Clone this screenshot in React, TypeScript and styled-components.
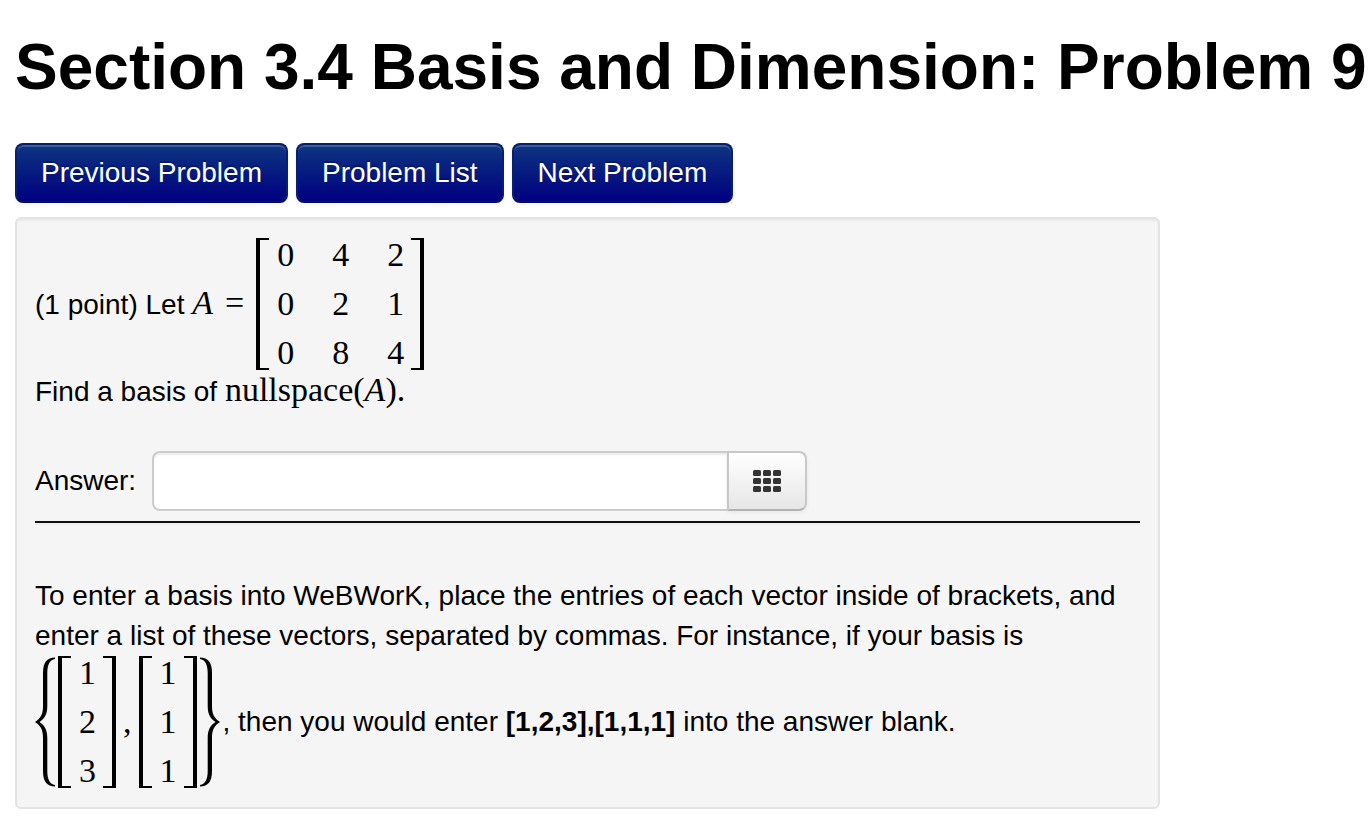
import React from "react";
import styled, { createGlobalStyle } from "styled-components";

const GlobalStyle = createGlobalStyle`
  *, *::before, *::after { box-sizing: border-box; }
  body {
    margin: 0;
    background: #fff;
    color: #000;
    font-family: "Liberation Sans", Arial, sans-serif;
    font-size: 28px;
    line-height: 40px;
  }
`;

const Page = styled.main`
  padding: 27px 0 11px 15px;
`;

const Title = styled.h1`
  margin: 0 0 36px;
  font-size: 64px;
  line-height: 80px;
  font-weight: 700;
`;

const ProblemNav = styled.nav`
  display: flex;
  flex-wrap: wrap;
  gap: 8px;
  margin-bottom: 14px;
`;

const NavButton = styled.a`
  padding: 8px 24px;
  border: 2px solid #04206f;
  border-bottom-color: #000f66;
  border-radius: 8px;
  background: linear-gradient(#0d3580, #000080) padding-box, #04206f;
  box-shadow: inset 0 2px 0 rgba(255, 255, 255, 0.2), 0 2px 4px rgba(0, 0, 0, 0.05);
  color: #fff;
  text-decoration: none;
  text-shadow: 0 -2px 0 rgba(0, 0, 0, 0.25);
`;

const ProblemPanel = styled.section`
  margin-right: 212px;
  padding: 19px 18px;
  border: 2px solid #e3e3e3;
  border-radius: 6px;
  background: #f5f5f5;
  box-shadow: inset 0 2px 2px rgba(0, 0, 0, 0.05);
`;

const Line = styled.div`
  display: flex;
  align-items: center;
  white-space: pre;
`;

const MathText = styled.span`
  font-family: "Liberation Serif", "Times New Roman", serif;
  font-size: 34px;
`;

const Equals = styled.span`
  margin: 0 12px;
`;

const MatrixBox = styled.span`
  display: inline-flex;
  gap: 7px;
  height: 132px;
`;

const Bracket = styled.span<{ $side: "left" | "right" }>`
  width: 13px;
  border: solid #000;
  border-width: ${(p) => (p.$side === "left" ? "2px 0 2px 4px" : "2px 4px 2px 0")};
`;

const Entries = styled.span<{ $columns: number }>`
  display: grid;
  grid-template-columns: repeat(${(p) => p.$columns}, 17px);
  gap: 15px 38px;
  margin-left: 1px;
  font-family: "Liberation Serif", "Times New Roman", serif;
  font-size: 34px;
  line-height: 34px;
`;

const VectorSet = styled.span`
  display: inline-flex;
  align-items: center;
  gap: 3px;
  margin-right: 3px;
`;

const Separator = styled(MathText)`
  margin: 0 4px;
`;

const AnswerRow = styled.div`
  display: flex;
  align-items: center;
  gap: 16px;
  margin-top: 39px;
`;

const InputGroup = styled.div`
  display: flex;
  flex: 0 1 655px;
  min-width: 0;
`;

const AnswerInput = styled.input`
  flex: 1;
  min-width: 0;
  height: 60px;
  padding: 8px 12px;
  border: 2px solid #ccc;
  border-right: 0;
  border-radius: 8px 0 0 8px;
  background: #fff;
  box-shadow: inset 0 2px 2px rgba(0, 0, 0, 0.075);
  font: inherit;
  outline: none;
`;

const KeypadButton = styled.button`
  display: flex;
  align-items: center;
  justify-content: center;
  width: 80px;
  height: 60px;
  padding: 0;
  border: 2px solid #c8c8c8;
  border-bottom-color: #b3b3b3;
  border-radius: 0 8px 8px 0;
  background: linear-gradient(#fff, #e6e6e6);
  box-shadow: 0 2px 4px rgba(0, 0, 0, 0.05);
`;

const Divider = styled.hr`
  height: 4px;
  margin: 10px 0 51px;
  border: 0;
  border-top: 2px solid #111;
  border-bottom: 2px solid #eee;
`;

const Paragraph = styled.p`
  margin: 0;
`;

function Matrix({ rows }: { rows: number[][] }) {
  return (
    <MatrixBox>
      <Bracket $side="left" />
      <Entries $columns={rows[0].length}>
        {rows.flat().map((value, i) => (
          <span key={i}>{value}</span>
        ))}
      </Entries>
      <Bracket $side="right" />
    </MatrixBox>
  );
}

function Brace({ side }: { side: "left" | "right" }) {
  return (
    <svg width="20" height="132" viewBox="0 0 20 132" aria-hidden="true">
      <path
        transform={side === "right" ? "matrix(-1 0 0 1 20 0)" : undefined}
        d="M20 1.5C12 2 8 6 8 17V50C8 58 6 62 0 66C6 70 8 74 8 82V115C8 126 12 130 20 130.5V129C15 128 12.3 124 12.3 115V82C12.3 73 9 69 4.5 66C9 63 12.3 59 12.3 50V17C12.3 8 15 4 20 3Z"
      />
    </svg>
  );
}

function KeypadIcon() {
  return (
    <svg width="28" height="22" viewBox="0 0 28 22" fill="#333" aria-hidden="true">
      {[0, 8, 16].map((y) =>
        [0, 10, 20].map((x) => <rect key={`${x}-${y}`} x={x} y={y} width="8" height="6" rx="1.5" />)
      )}
    </svg>
  );
}

export default function App() {
  return (
    <>
      <GlobalStyle />
      <Page>
        <Title>Section 3.4 Basis and Dimension: Problem 9</Title>
        <ProblemNav>
          <NavButton href="#previous">Previous Problem</NavButton>
          <NavButton href="#list">Problem List</NavButton>
          <NavButton href="#next">Next Problem</NavButton>
        </ProblemNav>
        <ProblemPanel>
          <Line>
            <span>
              (1 point) Let{" "}
              <MathText>
                <i>A</i>
                <Equals>=</Equals>
              </MathText>
            </span>
            <Matrix rows={[[0, 4, 2], [0, 2, 1], [0, 8, 4]]} />
          </Line>
          <Line>
            <span>
              Find a basis of{" "}
              <MathText>
                nullspace(<i>A</i>).
              </MathText>
            </span>
          </Line>
          <AnswerRow>
            <label htmlFor="answer">Answer:</label>
            <InputGroup>
              <AnswerInput id="answer" type="text" />
              <KeypadButton type="button" aria-label="Open equation editor">
                <KeypadIcon />
              </KeypadButton>
            </InputGroup>
          </AnswerRow>
          <Divider />
          <Paragraph>
            To enter a basis into WeBWorK, place the entries of each vector inside of brackets, and
            enter a list of these vectors, separated by commas. For instance, if your basis is
          </Paragraph>
          <Line>
            <VectorSet>
              <Brace side="left" />
              <Matrix rows={[[1], [2], [3]]} />
              <Separator>,</Separator>
              <Matrix rows={[[1], [1], [1]]} />
              <Brace side="right" />
            </VectorSet>
            <span>
              , then you would enter <b>[1,2,3],[1,1,1]</b> into the answer blank.
            </span>
          </Line>
        </ProblemPanel>
      </Page>
    </>
  );
}
